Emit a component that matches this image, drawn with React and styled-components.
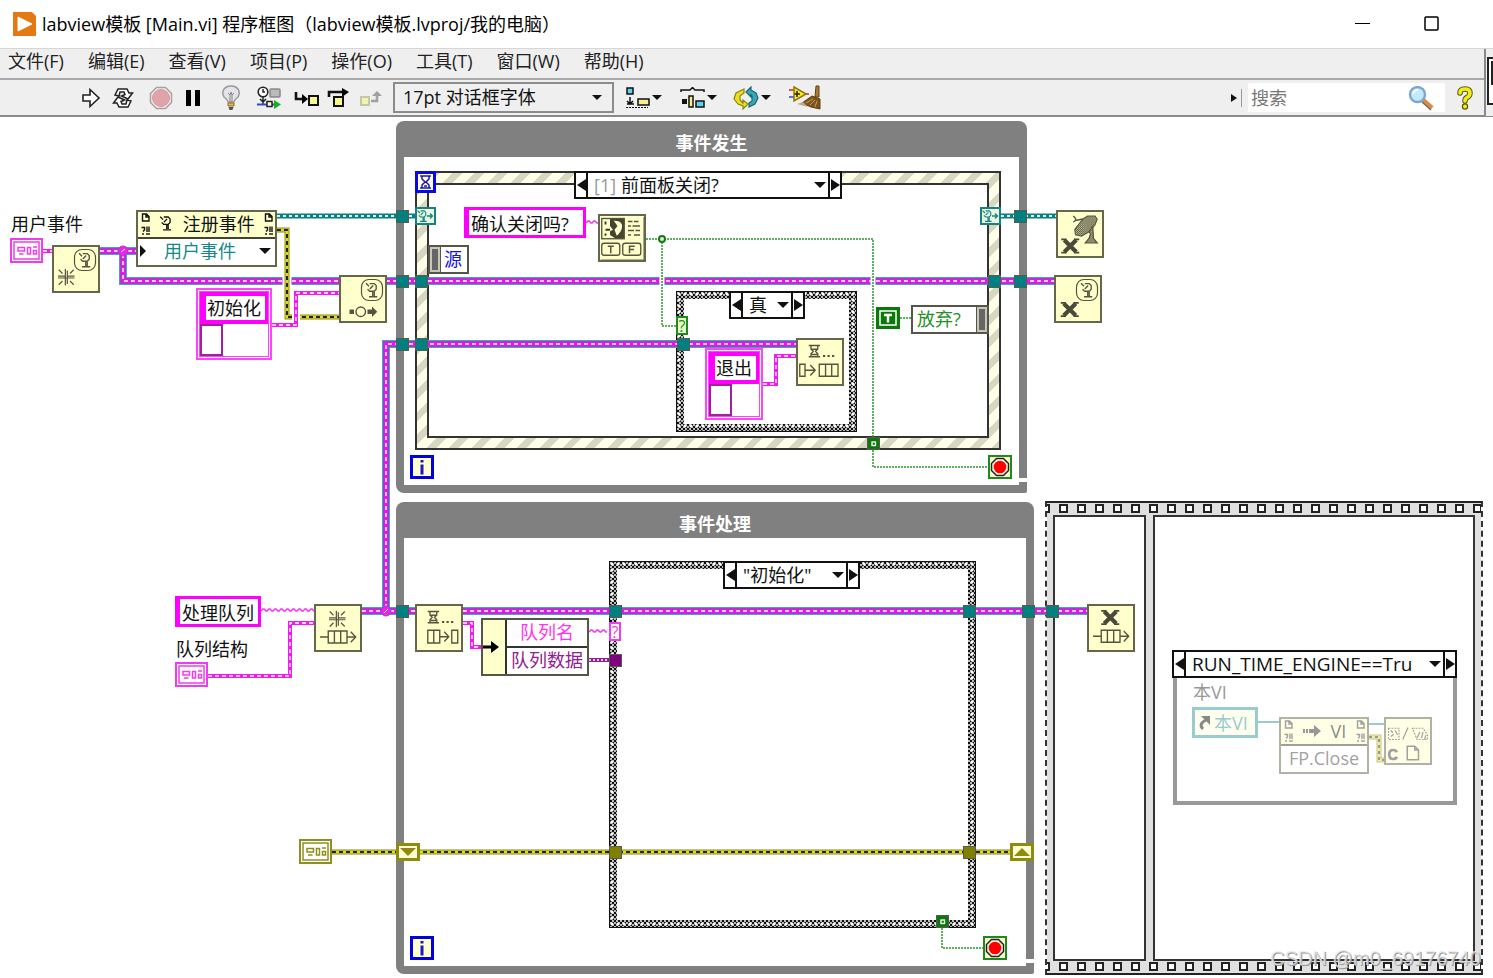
import React from 'react';
import styled, { createGlobalStyle, css } from 'styled-components';

const CHROME_HEIGHT = 117;
const FONT = '"Open Sans", "Noto Sans CJK SC", sans-serif';

const GlobalStyle = createGlobalStyle`
  *, *::before, *::after { box-sizing: border-box; }
  html, body, #root { height: 100%; }
  body { margin: 0; background: #fff; font: 18px/24px ${FONT}; color: #111; overflow: hidden; }
  button, input, select { font: inherit; color: inherit; margin: 0; padding: 0; border: 0; border-radius: 0; background: transparent; outline: 0; }
  select { appearance: none; }
  svg { display: block; flex: none; }
`;

const Window = styled.div`
  display: flex;
  flex-direction: column;
  height: 100vh;
`;

/* ---------- window chrome ---------- */

const TitleBar = styled.header`
  display: flex;
  align-items: center;
  gap: 6px;
  height: 48px;
  padding: 0 12px;
  color: #000;
  flex: none;
  svg { flex: none; }
`;
const WindowTitle = styled.h1`
  margin: 0;
  flex: 1;
  font-size: 18px;
  font-weight: 400;
  line-height: 24px;
  white-space: nowrap;
`;
const WindowButtons = styled.div`
  display: flex;
  gap: 21px;
  padding-right: 25px;
`;
const WindowButton = styled.button`
  display: grid;
  place-items: center;
  width: 48px;
  height: 44px;
`;

const Chrome = styled.div`
  display: flex;
  height: 69px;
  flex: none;
  background: #efefef;
  border-top: 1px solid #d6d6d6;
`;
const Bars = styled.div`
  flex: 1;
  min-width: 0;
  border-right: 2px solid #8a8a8a;
`;
const ConnectorPane = styled.aside`
  width: 7px;
  overflow: hidden;
  padding-top: 8px;
  border-bottom: 1px solid #8a8a8a;
`;
const ConnectorIcon = styled.div`
  width: 48px;
  height: 48px;
  margin-left: 1px;
  border: 2px solid #222;
  background: #fff;
  padding: 2px;
  &::after { content: ''; display: block; width: 24px; height: 24px; border: 2px solid #222; }
`;
const MenuBar = styled.nav`
  display: flex;
  align-items: center;
  gap: 24px;
  height: 31px;
  padding: 0 0 6px 8px;
  border-bottom: 2px solid #a8a8a8;
`;
const MenuItem = styled.button`
  height: 24px;
  line-height: 24px;
  color: #222;
  white-space: nowrap;
`;
const Toolbar = styled.div`
  display: flex;
  align-items: center;
  gap: 6px;
  height: 37px;
  padding: 0 3px 0 75px;
  border-bottom: 2px solid #8a8a8a;
`;
const ToolGroup = styled.div`
  display: flex;
`;
const ToolButton = styled.button`
  display: flex;
  align-items: center;
  justify-content: center;
  gap: 2px;
  width: ${(p) => (p.$wide ? 48 : 32)}px;
  height: 32px;
`;
const FontPicker = styled.div`
  position: relative;
  width: 221px;
  height: 31px;
  border: 2px solid #8c8c8c;
  svg { position: absolute; right: 10px; top: 11px; pointer-events: none; }
  select { width: 100%; height: 27px; padding-left: 8px; line-height: 27px; }
`;
const SearchArea = styled.div`
  display: flex;
  align-items: center;
  gap: 4px;
  margin-left: auto;
`;
const Divider = styled.span`
  width: 1px;
  height: 18px;
  margin-right: 2px;
  background: #999;
`;
const SearchBox = styled.label`
  display: flex;
  align-items: center;
  width: 197px;
  height: 29px;
  padding: 0 10px 0 3px;
  background: #fff;
  input { flex: 1; min-width: 0; height: 27px; }
  input::placeholder { color: #777; opacity: 1; }
`;

/* ---------- diagram canvas ---------- */

const Canvas = styled.main`
  position: relative;
  flex: 1;
  min-height: 0;
  overflow: hidden;
  background: #fff;
`;
const placed = css`
  position: absolute;
  left: ${(p) => p.$x}px;
  top: ${(p) => p.$y - CHROME_HEIGHT}px;
  width: ${(p) => (p.$w ? `${p.$w}px` : 'auto')};
  height: ${(p) => (p.$h ? `${p.$h}px` : 'auto')};
`;
const WireLayer = styled.svg`
  position: absolute;
  left: 0;
  top: 0;
  width: 100%;
  height: 100%;
`;
const WhileLoop = styled.section`
  ${placed}
  display: flex;
  flex-direction: column;
  background: #808080;
  border-radius: 8px 8px 2px 8px;
  padding: 0 8px 8px;
  &::before {
    content: '';
    position: absolute;
    right: 0;
    bottom: 11px;
    width: 9px;
    height: 4px;
    background: #fff;
  }
  &::after { content: ''; flex: 1; background: #fff; }
`;
const LoopTitle = styled.h2`
  margin: 0;
  padding-top: 10px;
  height: 36px;
  flex: none;
  color: #fff;
  font-size: 18px;
  font-weight: 700;
  line-height: 24px;
  text-align: center;
`;
const EventFrame = styled.section`
  ${placed}
  border: 2px solid #333;
  padding: 10px;
  background: repeating-linear-gradient(135deg, #fffee6 0 9px, #d8d7c4 9px 16px);
  &::before { content: ''; display: block; height: 100%; background: #fff; border: 2px solid #333; }
`;
const CaseFrame = styled.section`
  ${placed}
  border: 1px solid #111;
  padding: 7px;
  background:
    radial-gradient(circle at 2px 2px, #fff 1px, transparent 2px) 0 0 / 6px 6px,
    repeating-conic-gradient(#111 0 25%, #bbb 0 50%) 0 0 / 4px 4px;
  &::before { content: ''; display: block; height: 100%; background: #fff; }
`;
const SequenceFrame = styled.section`
  ${placed}
  display: flex;
  flex-direction: column;
  background: #e0e0e0 padding-box;
  border: 2px dashed #333;
  border-top: 2px solid #222;
  border-bottom: 2px solid #222;
`;
const FilmStrip = styled.div`
  display: flex;
  gap: 9px;
  height: 12px;
  padding-top: 1px;
  overflow: hidden;
  i { flex: none; width: 9px; height: 9px; border: 2px solid #222; background: #fff; }
  i:first-child { margin-left: -6px; }
`;
const Frames = styled.div`
  display: flex;
  flex: 1;
  gap: 7px;
  padding: 0 6px;
`;
const Frame = styled.div`
  flex: ${(p) => (p.$first ? '0 0 93px' : '1')};
  border: 2px solid #333;
  background: #fff;
`;
const DisabledFrame = styled.section`
  ${placed}
  border: 4px solid #999;
  background: #fff;
`;
const Selector = styled.div`
  ${placed}
  display: flex;
  border: 2px solid #111;
  background: #fff;
  font-size: ${(p) => (p.$latin ? 19 : 18)}px;
`;
const SelectorStep = styled.button`
  display: grid;
  place-items: center;
  width: 12px;
  border: 0 solid #111;
  border-right-width: ${(p) => (p.$next ? 0 : 2)}px;
  border-left-width: ${(p) => (p.$next ? 2 : 0)}px;
`;
const SelectorValue = styled.label`
  position: relative;
  flex: 1;
  min-width: 0;
  display: flex;
  align-items: center;
  padding-left: 6px;
  select { flex: 1; min-width: 0; height: 24px; line-height: 24px; }
  svg { position: absolute; right: 2px; top: 9px; pointer-events: none; }
  span { color: #999; margin-right: 5px; }
`;
const Caption = styled.p`
  ${placed}
  margin: 0;
  line-height: 24px;
  white-space: nowrap;
  color: ${(p) => (p.$dim ? '#999' : '#111')};
`;
const NodeBox = styled.div`
  ${placed}
  background: #ffffcc;
  border: 2px solid #66664d;
  opacity: ${(p) => (p.$dim ? 0.5 : 1)};
  svg { margin: -2px; }
`;
const Tunnel = styled.div`
  ${placed}
  border: 1px solid #5a5a4a;
  background: ${(p) => p.$color};
`;
const GlyphBox = styled.div`
  ${placed}
  display: grid;
  place-items: center;
  place-content: center;
  border: ${(p) => p.$line || 2}px solid ${(p) => p.$color};
  background: ${(p) => p.$fill || '#ffffdd'};
  color: ${(p) => p.$color};
  font-size: 16px;
  line-height: 14px;
  overflow: hidden;
`;
const StringConstant = styled.input`
  && {
    ${placed}
    border: 3px solid #f0f;
    border-left-width: 5px;
    background: #fff;
    padding-left: 2px;
  }
`;
const ClusterConstant = styled.div`
  ${placed}
  border: 2px solid #f4f;
  padding: 1px;
  background: #fff;
  > div { display: flex; flex-direction: column; height: 100%; border: 1px solid #f4f; }
`;
const ClusterName = styled.div`
  display: flex;
  height: 32px;
  padding: 4px 3px 4px 6px;
  background: #f0f;
  input { width: 100%; height: 24px; background: #fff; padding-left: 1px; }
`;
const ClusterValue = styled.div`
  flex: 1;
  width: 23px;
  border: 2px solid #a020a0;
`;
const RegisterNode = styled.div`
  ${placed}
  display: flex;
  flex-direction: column;
  background: #fff;
  border: 2px solid #66664d;
  opacity: ${(p) => (p.$dim ? 0.5 : 1)};
`;
const RegisterHead = styled.div`
  display: flex;
  align-items: center;
  justify-content: space-between;
  height: 27px;
  padding: 0 2px 2px 3px;
  background: #ffffcc;
  border-bottom: 2px solid #444433;
`;
const RegisterRow = styled.label`
  position: relative;
  flex: 1;
  display: flex;
  align-items: center;
  justify-content: center;
  padding-bottom: 2px;
  color: ${(p) => p.$color};
  select { width: 100%; height: 24px; line-height: 24px; padding-left: 26px; }
  svg:first-child { position: absolute; left: 2px; top: 6px; }
  svg:last-child { position: absolute; right: 4px; top: 9px; pointer-events: none; }
`;
const EventData = styled.div`
  ${placed}
  display: flex;
  flex-direction: ${(p) => (p.$right ? 'row-reverse' : 'row')};
  border: 2px solid #55554a;
  background: #fff;
  color: ${(p) => p.$color};
  line-height: 25px;
  span { flex: 1; padding-left: 4px; }
  i { width: 10px; border: 2px solid #c8c6b4; background: #666; box-shadow: 0 0 0 1px #55554a; }
`;
const Unbundle = styled.div`
  ${placed}
  display: grid;
  grid-template-columns: 22px 1fr;
  border: 2px solid #55554a;
  background: #ffffcc;
  ul { margin: 0; padding: 0; list-style: none; border-left: 2px solid #333; background: #fff; }
  li { height: 26px; line-height: 25px; text-align: center; color: #f3e; }
  li + li { border-top: 2px solid #333; color: #902090; height: 28px; }
  svg { align-self: center; }
`;
const Reference = styled.div`
  ${placed}
  display: flex;
  align-items: center;
  gap: 3px;
  padding-left: 3px;
  border: 3px solid #99cccc;
  background: #fffff0;
  color: #99cccc;
  white-space: nowrap;
`;
const Watermark = styled.p`
  ${placed}
  margin: 0;
  font: 20px/24px "Liberation Sans", sans-serif;
  color: rgba(232, 232, 232, 0.8);
  text-shadow: 1px 1px 0 #999;
  white-space: nowrap;
`;

/* ---------- small drawings ---------- */

const Down = ({ w = 12, color = '#111' }) => (
  <svg width={w} height={w / 2} viewBox="0 0 12 6"><path d="M0 0H12L6 6Z" fill={color} /></svg>
);
const Side = ({ next }) => (
  <svg width="9" height="12" viewBox="0 0 9 12"><path d={next ? 'M0 0L9 6L0 12Z' : 'M9 0L0 6L9 12Z'} fill="#111" /></svg>
);
const INK = '#55553f';

const Dish = ({ x = 0, y = 0, c = INK }) => (
  <g transform={`translate(${x} ${y})`} fill="none" stroke={c} strokeWidth="0.9">
    <path d="M0.5 0.5L2.500 2.500M3 0.700H6L7.300 2V4.500L6 5.800H3L1.500 4.500M3 4.300L5.300 2M5 5.800V9M6 5.800V9M2.500 9.500H8" />
  </g>
);
const BadgeDish = () => (
  <g>
    <rect x="15" y="3" width="14" height="14" rx="5" fill="none" stroke={INK} strokeWidth="0.8" />
    <Dish x={17.5} y={5} />
  </g>
);
const Burst = ({ x, y }) => (
  <g transform={`translate(${x} ${y})`} fill="none" stroke={INK} strokeWidth="0.8">
    <path d="M-5.500 0.500H5.500M-5.500 -0.700H-1M1 -0.700H5.500M-0.600 -5.500V5.500M0.700 -4.500V4.500M-5 -5L-2.500 -2.500M2.500 2.500L5 5M5 -5L2.500 -2.500M-2.500 2.500L-5 5" />
  </g>
);
const Cross = ({ x, y }) => (
  <g transform={`translate(${x} ${y})`} fill="none" stroke="#4a4a3a">
    <path d="M2.500 1L10.500 9M10.500 1L2.500 9" strokeWidth="2.800" />
    <path d="M0.5 0.600H4M9 0.600H12.500M0.5 9.400H4M9 9.400H12.500" strokeWidth="1.200" />
  </g>
);
const QueueBoxes = () => (
  <path d="M4 22H9.500M9.500 18H22V26H9.500ZM13.600 18V26M17.800 18V26M22 22H27.500M24.500 18.500L27.800 22L24.500 25.500" fill="none" stroke={INK} strokeWidth="0.9" />
);
const Hourglass = () => (
  <g stroke={INK} fill="none" strokeWidth="0.9">
    <path d="M8.500 5H16M8.500 12.500H16M10 5.500V7.500L11.500 8.800L10 10.500V12M14.500 5.500V7.500L13 8.800L14.500 10.500V12M10.500 7.500H14M10.500 11H14" />
    <path d="M18 12H19.500M21 12H22.500M24 12H25.500" strokeWidth="1.200" />
  </g>
);

const nodeArt = {
  createEvent: <><BadgeDish /><Burst x={9.5} y={21.5} /></>,
  generateEvent: (
    <>
      <BadgeDish />
      <rect x="7" y="23" width="3" height="3" fill={INK} />
      <circle cx="14.500" cy="24.500" r="3.200" fill="none" stroke={INK} strokeWidth="0.9" />
      <path d="M19 23H22V21L25.500 24.500L22 28V26H19Z" fill={INK} />
    </>
  ),
  destroyEvent: <><BadgeDish /><Cross x={4} y={18} /></>,
  createQueue: <><Burst x={15.5} y={10} /><QueueBoxes /></>,
  destroyQueue: <><Cross x={9} y={4} /><g transform="translate(0 -0.5)"><QueueBoxes /></g></>,
  dequeue: (
    <>
      <Hourglass />
      <path d="M8.500 17.500H16.500V26H8.500ZM12.500 17.500V26M16.500 21.800H22M19.500 18.500L22.500 21.800L19.500 25M24.500 17.500H28.500V26H24.500Z" fill="none" stroke={INK} strokeWidth="0.9" />
    </>
  ),
  enqueue: (
    <>
      <Hourglass />
      <path d="M2.500 17.500H6V25.500H2.500ZM6 21.500H12.500M9.500 18L12.800 21.500L9.500 25M15.500 17.500H28V25.500H15.500ZM19.700 17.500V25.500M23.800 17.500V25.500" fill="none" stroke={INK} strokeWidth="0.9" />
    </>
  ),
  unregister: (
    <>
      <defs>
        <pattern id="mesh" width="1.400" height="1.400" patternUnits="userSpaceOnUse">
          <rect width="1.400" height="1.400" fill="#d4d4aa" /><path d="M0 0H0.7V0.7H0ZM0.7 0.7H1.400V1.400H0.7Z" fill="#44442f" />
        </pattern>
      </defs>
      <path d="M11.500 4L13 5.500V7L11.500 8M13 7L18 6" stroke={INK} fill="none" strokeWidth="0.900" />
      <path d="M18 6L21 4H26L27.500 6L26 10L22 14.500L17 17.500L13 16.500L12.500 13Z" fill="url(#mesh)" stroke={INK} strokeWidth="0.7" />
      <path d="M22 14.500L24.500 11L25 19L27.500 22H19.500L22 19L23 16Z" fill="url(#mesh)" stroke={INK} strokeWidth="0.8" />
      <Cross x={3} y={19} />
    </>
  ),
  dialog: (
    <>
      <path d="M31 2V31H2" fill="none" stroke="#66664d" strokeWidth="1.400" />
      <rect x="2.500" y="3" width="15" height="13.500" fill="#ffffcc" />
      <path d="M8 3H17.500V16.500H12L8 14V11.500L10 10.500L8 8Z" fill="#44442f" />
      <path d="M10.500 4.500Q16.500 4 16 9Q15.500 12 12.500 14.500L11 10.500L13 8Z" fill="#ffffcc" />
      <path d="M5 5V7M5 10.500H8M5 13V14.500" stroke="#333" strokeWidth="1.200" />
      <rect x="2.500" y="3" width="15" height="13.500" fill="none" stroke={INK} strokeWidth="0.9" />
      <path d="M20 5H23M24 5H27M20 8H22M23 8H28M20 11H24M25 11H28M20 14H22M24 14H28" stroke={INK} strokeWidth="0.9" />
      <rect x="2.500" y="19.500" width="12" height="8" rx="1.500" fill="none" stroke={INK} strokeWidth="0.9" />
      <rect x="16.500" y="19.500" width="12" height="8" rx="1.500" fill="none" stroke={INK} strokeWidth="0.9" />
      <path d="M6.500 21.500H10.500M8.500 21.500V26.200M21 26.200V21.500H24.500M21 23.700H24" fill="none" stroke={INK} strokeWidth="1" />
    </>
  ),
  closeRef: (
    <>
      <g fill="none" stroke="#444" strokeWidth="0.8">
        <path d="M3 7.500H10V15H3ZM19 7.500H26L29 12V15H22Z" strokeDasharray="1.200 0.800" />
        <path d="M4.500 9L6 10.500M7.500 9L9 12M4.500 13L6.500 11.500M24 10L22 14M26 10L25 14M28 12L27 15" />
        <path d="M12.500 15L16 7" />
        <path d="M15.500 19.500H20.500L23 22V28.500H15.500ZM20.500 19.500V22H23" strokeWidth="1" />
      </g>
      <path d="M8.500 23.500Q8 22 6 22Q3.500 22 3.500 25T6 28Q8 28 8.500 26.500" fill="none" stroke="#444" strokeWidth="1.800" />
    </>
  ),
};

function DiagramNode({ x, y, art, dim }) {
  return (
    <NodeBox $x={x} $y={y} $w={48} $h={48} $dim={dim}>
      <svg width="48" height="48" viewBox="0 0 32 32">{nodeArt[art]}</svg>
    </NodeBox>
  );
}

function CaseSelector({ x, y, w, value, index, latin }) {
  return (
    <Selector $x={x} $y={y} $w={w} $h={28} $latin={latin}>
      <SelectorStep aria-label="上一个分支"><Side /></SelectorStep>
      <SelectorValue>
        {index && <span>{index}</span>}
        <select aria-label="分支选择" defaultValue={value}><option>{value}</option></select>
        <Down />
      </SelectorValue>
      <SelectorStep $next aria-label="下一个分支"><Side next /></SelectorStep>
    </Selector>
  );
}

function NamedCluster({ x, y, w, h, name }) {
  return (
    <ClusterConstant $x={x} $y={y} $w={w} $h={h}>
      <div>
        <ClusterName><input aria-label="队列名" defaultValue={name} /></ClusterName>
        <ClusterValue />
      </div>
    </ClusterConstant>
  );
}

const ClusterIcon = ({ x, y, c }) => (
  <g transform={`translate(${x} ${y})`} stroke={c} fill="#fff">
    <rect x="1" y="1" width="31" height="23" strokeWidth="2" />
    <rect x="4" y="4" width="25" height="17" strokeWidth="1.500" />
    <path d="M8 9.500H14.500V13H8ZM9 16H13.500M17.500 9.500H20.500V16H17.500ZM23 9H27M23.500 12.500H26.500V16H23.500Z" fill="none" strokeWidth="1.500" />
  </g>
);

const PortMarks = ({ c = '#111' }) => (
  <svg width="9" height="24" viewBox="0 0 9 24">
    <path d="M1.500 2H5.500L8 4.500V9H1.500ZM5 2V5H8" fill="none" stroke={c} strokeWidth="1.400" />
    <path d="M0.5 15.500H3.500V18L2 19.500M2 21V23M6 14.500V20M8 14.500V20M6 21V23M8 21V23" fill="none" stroke={c} strokeWidth="1.400" />
  </svg>
);

const EventTunnel = ({ x }) => (
  <GlyphBox $x={x} $y={207} $w={21} $h={18} $color="#178080" $fill="#e8f8e0">
    <svg width="17" height="14" viewBox="0 0 17 14">
      <g transform="translate(0 1) scale(1.200)"><Dish c="#178080" /></g>
      <path d="M10 7H15.500M13 4.500L15.500 7L13 9.500" fill="none" stroke="#178080" strokeWidth="1.300" />
    </svg>
  </GlyphBox>
);

const Iteration = ({ y }) => (
  <GlyphBox $x={410} $y={y} $w={24} $h={24} $line={3} $color="#0000e0" $fill="#ffffd0">
    <svg width="8" height="16" viewBox="0 0 8 16"><path d="M2.500 1H5.500V3.500H2.500ZM2.500 5.500H5.500V15.500H2.500Z" fill="#1818c8" /></svg>
  </GlyphBox>
);
const StopTerminal = ({ x, y }) => (
  <GlyphBox $x={x} $y={y} $w={24} $h={24} $color="#1c8a1c" $fill="#ffffcc">
    <svg width="20" height="20" viewBox="0 0 20 20">
      <path d="M6.500 1.500H13.500L18.500 6.500V13.500L13.500 18.500H6.500L1.500 13.500V6.500Z" fill="#fff4dc" stroke="#222" strokeWidth="1.500" />
      <circle cx="10" cy="10" r="6.300" fill="#f00" />
    </svg>
  </GlyphBox>
);
const BoolTunnel = ({ x, y }) => (
  <Tunnel $x={x} $y={y} $w={13} $h={13} $color="#0c780c">
    <svg width="11" height="11" viewBox="0 0 11 11"><rect x="4" y="4" width="3.500" height="3.500" fill="none" stroke="#fff" strokeWidth="1.300" /></svg>
  </Tunnel>
);

/* ---------- wires ---------- */

const wave = (x1, x2, y) => {
  let d = `M${x1} ${y + 1}`;
  for (let x = x1; x < x2 - 2; x += 6) d += 'l2 -2h1l2 2h1';
  return d;
};
const wirePath = (layers) => function Wire({ d }) {
  return (
    <g fill="none">
      {layers.map(([stroke, width, dash]) => <path key={stroke + width} d={d} stroke={stroke} strokeWidth={width} strokeDasharray={dash} />)}
    </g>
  );
};
const RefWire = wirePath([['#48a0c4', 8], ['#9048c0', 6], ['#ee10ee', 4], ['#ffc8ff', 2, '4 3']]);
const ClusterWire = wirePath([['#f418f4', 4], ['#fff', 1.4, '4 3']]);
const EventWire = wirePath([['#0c8080', 5], ['#d8f4f4', 2, '3 3']]);
const ErrorWire = wirePath([['#8c8c10', 5], ['#e0dc20', 3], ['#222', 2, '4 3']]);
const PaleErrorWire = wirePath([['#c8c888', 5], ['#f0ee98', 3], ['#999', 2, '3 3']]);
const VariantWire = wirePath([['#902090', 4], ['#fff', 1.4, '2 2']]);
const BoolWire = wirePath([['#2c942c', 1.5, '2 1']]);
const StringWire = wirePath([['#f030f0', 1.4]]);

function Wires() {
  return (
    <WireLayer aria-hidden="true">
      <g transform={`translate(0 ${-CHROME_HEIGHT})`}>
        <ClusterWire d="M43 251H52" />
        <RefWire d="M100 251H136" />
        <RefWire d="M123 247V281H339" />
        <circle cx="123" cy="251" r="5" fill="#f020f0" stroke="#9048c0" />
        <path d="M121 252L125 249" stroke="#fff" />
        <EventWire d="M277 216H415M1001 216H1056" />
        <path d="M287 270V292" stroke="#fff" strokeWidth="9" />
        <ErrorWire d="M277 230H287V317H339" />
        <path d="M292 317H300" stroke="#fff" strokeWidth="6" />
        <ClusterWire d="M272 325H296V293H339" />
        <RefWire d="M386 281H1054" />
        <RefWire d="M386 615V344H797" />
        <RefWire d="M362 611H415" />
        <RefWire d="M463 611H1087" />
        <circle cx="386" cy="611" r="5" fill="#f020f0" stroke="#9048c0" />
        <path d="M384 613L388 609" stroke="#fff" />
        <path d="M662 276V286M873 276V286" stroke="#fff" strokeWidth="5" />
        <BoolWire d="M646 239H873V467H988" />
        <BoolWire d="M662 239V326H676" />
        <circle cx="662" cy="239" r="3" fill="#d8f0d8" stroke="#187818" strokeWidth="2" />
        <BoolWire d="M900 318H911" />
        <BoolWire d="M942 928V948H983" />
        <StringWire d={wave(586, 598, 222)} />
        <StringWire d={wave(261, 314, 610)} />
        <StringWire d={wave(589, 609, 631)} />
        <ClusterWire d="M763 384H776V356H796" />
        <ClusterWire d="M208 676H290V623H314" />
        <ClusterWire d="M463 623H472V647H482" />
        <VariantWire d="M589 660H610" />
        <ErrorWire d="M332 852H1010" />
        <ClusterIcon x={10} y={238} c="#f03cf0" />
        <ClusterIcon x={175} y={662} c="#f03cf0" />
        <ClusterIcon x={299} y={839} c="#8f8f20" />
        <path d="M1258 722H1279M1369 724H1384" stroke="#99cccc" strokeWidth="2" />
        <PaleErrorWire d="M1369 737H1379V760H1384" />
      </g>
    </WireLayer>
  );
}

const tealTunnels = [
  [402, 216], [1020, 216], [402, 281], [421, 281], [994, 281], [1020, 281], [402, 344],
  [421, 344], [683, 344], [402, 611], [615, 611], [969, 611], [1028, 611], [1052, 611],
];

/* ---------- toolbar ---------- */

const runIcons = [
  ['运行', <svg width="20" height="22" viewBox="0 0 20 22"><path d="M2 8H9V2.500L18 11L9 19.500V14H2Z" fill="#fff" stroke="#222" strokeWidth="1.600" /></svg>],
  ['连续运行', <svg width="26" height="22" viewBox="0 0 26 22"><path d="M5 8L8 2H17L19 6H22.500L18 12L11.500 9L15 7.500L14 5H10L9 9ZM21 14L18 20H9L7 16H3.500L8 10L14.500 13L11 14.500L12 17H16L17 13Z" fill="#fff" stroke="#222" strokeWidth="1.500" /></svg>],
];
const stopIcons = [
  ['中止执行', <svg width="24" height="24" viewBox="0 0 24 24"><path d="M7.500 1.500H16.500L22.500 7.500V16.500L16.500 22.500H7.500L1.500 16.500V7.500Z" fill="#f4eeee" stroke="#a8a0a0" strokeWidth="1.500" /><circle cx="12" cy="12" r="8.500" fill="#e0a4a8" stroke="#cf9ba0" /></svg>],
  ['暂停', <svg width="16" height="18" viewBox="0 0 16 18"><path d="M1 1H6V17H1ZM10 1H15V17H10Z" fill="#000" /></svg>],
];
const stepIcons = [
  ['单步步入', <svg width="26" height="20" viewBox="0 0 26 20"><path d="M2 4V11H10" fill="none" stroke="#111" strokeWidth="2.600" /><path d="M8 6L14 11L8 16Z" /><rect x="15" y="8" width="9" height="9" fill="#f8f890" stroke="#111" strokeWidth="2" /></svg>],
  ['单步步过', <svg width="24" height="20" viewBox="0 0 24 20"><path d="M2 9V4H16" fill="none" stroke="#111" strokeWidth="2.600" /><path d="M15 0L22 4L15 9Z" /><rect x="7" y="9" width="9" height="9" fill="#f8f890" stroke="#111" strokeWidth="2" /></svg>],
  ['单步步出', <svg width="24" height="20" viewBox="0 0 24 20"><rect x="2" y="9" width="8" height="8" fill="#f2f2b4" stroke="#c8c8a0" strokeWidth="2" /><path d="M12 13H18V6" fill="none" stroke="#a0a0a0" strokeWidth="2.600" /><path d="M13 8L18 3L23 8Z" fill="#a0a0a0" /></svg>],
];
const BulbIcon = () => (
  <svg width="20" height="26" viewBox="0 0 20 26">
    <path d="M7 17Q6 14 3 12Q1 9 2 6Q4 1 10 1T18 6Q19 9 17 12Q14 14 13 17Z" fill="#e4e4e8" stroke="#999" strokeWidth="1.500" />
    <path d="M7 8L9 10L10 7L11 10L13 8M9 10V17M11 10V17" fill="none" stroke="#888" />
    <path d="M7 18H13V21H7Z" fill="#e4b848" stroke="#98701c" /><path d="M7.500 22H12.500L11.500 25H8.500Z" fill="#555" />
  </svg>
);
const RetainIcon = () => (
  <svg width="26" height="24" viewBox="0 0 26 24">
    <circle cx="7" cy="6" r="4.800" fill="#fff" stroke="#222" strokeWidth="1.600" /><path d="M7 3V6H9M7 11V19M4 13L7 16L10 13" fill="none" stroke="#222" strokeWidth="1.500" />
    <rect x="14" y="3" width="10" height="8" rx="1" fill="#bbb" stroke="#888" strokeWidth="1.500" />
    <path d="M1 18.500H19" stroke="#2450d0" strokeWidth="2" /><rect x="11" y="15.500" width="5" height="5" fill="#fff" stroke="#222" strokeWidth="1.500" />
    <path d="M18 14L25 18.500L18 23Z" fill="#18b020" />
  </svg>
);
const AlignIcon = () => (
  <svg width="24" height="22" viewBox="0 0 24 22">
    <rect x="1" y="1" width="6" height="6" fill="#60d0f0" stroke="#111" strokeWidth="1.500" /><path d="M4 10V17M1 14L4 17L7 14M1 17H8" fill="none" stroke="#111" strokeWidth="1.500" />
    <path d="M0 20.500H22" stroke="#111" strokeDasharray="2 1" /><rect x="12" y="12" width="11" height="6" fill="#f8f090" stroke="#111" strokeWidth="1.500" />
  </svg>
);
const DistributeIcon = () => (
  <svg width="25" height="22" viewBox="0 0 25 22">
    <path d="M1 5V3H10L12.500 0.500L15 3H24V5" fill="none" stroke="#111" strokeWidth="1.500" /><rect x="2" y="12" width="5" height="5" fill="#111" />
    <rect x="9" y="9" width="4" height="11" fill="#f8f090" stroke="#111" strokeWidth="1.500" /><rect x="16" y="14" width="8" height="6" fill="#60d0f0" stroke="#111" strokeWidth="1.500" />
  </svg>
);
const ReorderIcon = () => (
  <svg width="26" height="24" viewBox="0 0 26 24">
    <path d="M11 3L3 7L1 13L5 18L10 20V23L15 18L10 14V17L7 14V10L11 7Z" fill="#e8e020" stroke="#8c8410" strokeWidth="1.200" />
    <path d="M13 6L18 1V4L23 7L25 12L22 18L16 21V17L19 15V10L18 8V11Z" fill="#38a8b8" stroke="#186878" strokeWidth="1.200" />
  </svg>
);
const CleanIcon = () => (
  <svg width="34" height="26" viewBox="0 0 34 26">
    <path d="M0 5H5M14 9H20" stroke="#e02020" strokeWidth="1.500" /><path d="M0 12H5" stroke="#2848e0" strokeWidth="1.500" />
    <path d="M5 2L17 9L5 16Z" fill="#f8e828" stroke="#907808" strokeWidth="1.500" /><path d="M8 6V12M5.500 9H11" stroke="#222" strokeWidth="1.500" />
    <path d="M27 1H30V12H26Z" fill="#a87838" stroke="#604010" /><path d="M23 11L31 14V24L22 22L13 18Z" fill="#7c5420" stroke="#604010" />
    <path d="M17 18L24 14M21 20L26 15M26 22L28 16" stroke="#c8a058" /><path d="M8 19L14 17L19 22Z" fill="#b8a890" />
  </svg>
);
const SearchIcon = () => (
  <svg width="28" height="26" viewBox="0 0 28 26">
    <path d="M16 15L25 23" stroke="#d88c40" strokeWidth="4.500" /><path d="M15 17L24 25" stroke="#806860" strokeWidth="1.500" />
    <circle cx="10.500" cy="9.500" r="7.500" fill="#c4e8fc" stroke="#7ca8d0" strokeWidth="2.400" /><path d="M6 9Q7 5 11 5" fill="none" stroke="#fff" strokeWidth="2" />
  </svg>
);
const HelpIcon = () => (
  <svg width="18" height="24" viewBox="0 0 18 24">
    <g fill="none" strokeLinecap="round"><path d="M4 7Q4 3 9 3T14 7Q14 10 11 11.500Q9 12.500 9 15" stroke="#55550c" strokeWidth="5.500" /><path d="M4 7Q4 3 9 3T14 7Q14 10 11 11.500Q9 12.500 9 15" stroke="#f4ec18" strokeWidth="3.600" /></g>
    <circle cx="9" cy="20.500" r="2.600" fill="#f4ec18" stroke="#55550c" strokeWidth="1.200" />
  </svg>
);

const menus = ['文件(F)', '编辑(E)', '查看(V)', '项目(P)', '操作(O)', '工具(T)', '窗口(W)', '帮助(H)'];

const IconGroup = ({ items }) => (
  <ToolGroup>{items.map(([name, icon]) => <ToolButton key={name} aria-label={name}>{icon}</ToolButton>)}</ToolGroup>
);

const holes = Array.from({ length: 25 }, (_, i) => <i key={i} />);

export default function App() {
  return (
    <Window>
      <GlobalStyle />
      <TitleBar>
        <svg width="24" height="24" viewBox="0 0 24 24"><path d="M1 0H20L24 4V24H1Z" fill="#e47911" /><path d="M6 5L20 12L6 19Z" fill="#fff" stroke="#fff" strokeLinejoin="round" /></svg>
        <WindowTitle>labview模板 [Main.vi] 程序框图（labview模板.lvproj/我的电脑）</WindowTitle>
        <WindowButtons>
          <WindowButton aria-label="最小化"><svg width="16" height="16"><path d="M0 7.500H15" stroke="#000" /></svg></WindowButton>
          <WindowButton aria-label="最大化"><svg width="16" height="16"><rect x="1" y="1" width="13" height="13" rx="1" fill="none" stroke="#000" strokeWidth="1.500" /></svg></WindowButton>
        </WindowButtons>
      </TitleBar>
      <Chrome>
        <Bars>
          <MenuBar>{menus.map((m) => <MenuItem key={m}>{m}</MenuItem>)}</MenuBar>
          <Toolbar>
            <IconGroup items={runIcons} />
            <IconGroup items={stopIcons} />
            <ToolButton aria-label="高亮显示执行过程"><BulbIcon /></ToolButton>
            <ToolButton aria-label="保存连线值"><RetainIcon /></ToolButton>
            <IconGroup items={stepIcons} />
            <FontPicker>
              <select aria-label="字体" defaultValue="17pt 对话框字体"><option>17pt 对话框字体</option></select>
              <Down w={10} />
            </FontPicker>
            <ToolButton $wide aria-label="对齐对象"><AlignIcon /><Down w={10} /></ToolButton>
            <ToolButton $wide aria-label="分布对象"><DistributeIcon /><Down w={10} /></ToolButton>
            <ToolButton $wide aria-label="重新排序"><ReorderIcon /><Down w={10} /></ToolButton>
            <ToolButton $wide aria-label="整理程序框图"><CleanIcon /></ToolButton>
            <SearchArea>
              <svg width="6" height="8"><path d="M0 0L6 4L0 8Z" fill="#111" /></svg>
              <Divider />
              <SearchBox><input type="search" aria-label="搜索" placeholder="搜索" /><SearchIcon /></SearchBox>
              <ToolButton aria-label="帮助"><HelpIcon /></ToolButton>
            </SearchArea>
          </Toolbar>
        </Bars>
        <ConnectorPane><ConnectorIcon /></ConnectorPane>
      </Chrome>

      <Canvas>
        <WhileLoop $x={396} $y={121} $w={631} $h={372}><LoopTitle>事件发生</LoopTitle></WhileLoop>
        <WhileLoop $x={396} $y={502} $w={638} $h={472}><LoopTitle>事件处理</LoopTitle></WhileLoop>
        <EventFrame $x={415} $y={171} $w={586} $h={279} />
        <CaseFrame $x={676} $y={291} $w={181} $h={141} />
        <CaseFrame $x={609} $y={561} $w={367} $h={367} />
        <SequenceFrame $x={1045} $y={501} $w={438} $h={474}>
          <FilmStrip>{holes}</FilmStrip>
          <Frames><Frame $first /><Frame /></Frames>
          <FilmStrip>{holes}</FilmStrip>
        </SequenceFrame>
        <DisabledFrame $x={1173} $y={674} $w={284} $h={131} />

        <Wires />

        {tealTunnels.map(([cx, cy]) => <Tunnel key={`${cx}-${cy}`} $x={cx - 6} $y={cy - 6} $w={13} $h={13} $color="#008080" />)}
        <Tunnel $x={609} $y={654} $w={13} $h={13} $color="#800080" />
        <Tunnel $x={609} $y={846} $w={13} $h={13} $color="#808000" />
        <Tunnel $x={963} $y={846} $w={13} $h={13} $color="#808000" />
        <BoolTunnel x={867} y={437} />
        <BoolTunnel x={936} y={915} />
        <EventTunnel x={415} />
        <EventTunnel x={980} />

        <Caption $x={11} $y={212}>用户事件</Caption>
        <DiagramNode x={52} y={245} art="createEvent" />
        <RegisterNode $x={136} $y={210} $w={141} $h={57}>
          <RegisterHead>
            <PortMarks />
            <svg width="14" height="16" viewBox="0 0 9 11"><Dish c="#111" /></svg>
            <span>注册事件</span>
            <PortMarks />
          </RegisterHead>
          <RegisterRow $color="#148888">
            <svg width="6" height="12"><path d="M0 0L6 6L0 12Z" fill="#111" /></svg>
            <select aria-label="注册的事件" defaultValue="用户事件"><option>用户事件</option></select>
            <Down />
          </RegisterRow>
        </RegisterNode>
        <NamedCluster x={196} y={288} w={76} h={72} name="初始化" />
        <DiagramNode x={339} y={275} art="generateEvent" />

        <GlyphBox $x={415} $y={171} $w={21} $h={22} $line={3} $color="#0808e8" $fill="#ffffe0">
          <svg width="15" height="16" viewBox="0 0 15 16"><path d="M2 2H13M2 14H13M4 2V5L7 8L4 11V14M11 2V5L8 8L11 11V14M6 12H9" fill="none" stroke="#1818b8" strokeWidth="1.500" /></svg>
        </GlyphBox>
        <CaseSelector x={574} y={171} w={268} index="[1]" value="前面板关闭?" />
        <StringConstant aria-label="对话框消息" $x={464} $y={207} $w={122} $h={31} defaultValue="确认关闭吗?" />
        <DiagramNode x={598} y={214} art="dialog" />
        <EventData $x={428} $y={245} $w={41} $h={29} $color="#1010e0"><i /><span>源</span></EventData>
        <CaseSelector x={729} y={291} w={76} value="真" />
        <GlyphBox $x={676} $y={316} $w={12} $h={19} $color="#1c8a1c" $fill="#e8ffc8">?</GlyphBox>
        <NamedCluster x={705} y={348} w={58} h={72} name="退出" />
        <DiagramNode x={796} y={338} art="enqueue" />
        <GlyphBox $x={876} $y={307} $w={24} $h={22} $color="#0c780c" $fill="#0c780c">
          <svg width="18" height="16" viewBox="0 0 18 16"><rect x="1" y="1" width="16" height="14" fill="#0c780c" stroke="#fff" strokeWidth="1.500" /><path d="M5 5H13M9 4.500V12.500" fill="none" stroke="#fff" strokeWidth="2.400" /></svg>
        </GlyphBox>
        <EventData $right $x={911} $y={305} $w={78} $h={29} $color="#289028"><i /><span>放弃?</span></EventData>
        <Iteration y={455} />
        <StopTerminal x={988} y={455} />
        <DiagramNode x={1056} y={210} art="unregister" />
        <DiagramNode x={1054} y={275} art="destroyEvent" />

        <StringConstant aria-label="队列名称" $x={175} $y={596} $w={86} $h={31} defaultValue="处理队列" />
        <Caption $x={176} $y={637}>队列结构</Caption>
        <DiagramNode x={314} y={604} art="createQueue" />
        <DiagramNode x={415} y={604} art="dequeue" />
        <Unbundle $x={481} $y={618} $w={108} $h={58}>
          <svg width="22" height="14" viewBox="0 0 22 14"><path d="M0 5.500H8V1L16 7L8 13V8.500H0Z" fill="#000" /></svg>
          <ul><li>队列名</li><li>队列数据</li></ul>
        </Unbundle>
        <CaseSelector x={723} y={561} w={137} value={'"初始化"'} />
        <GlyphBox $x={609} $y={622} $w={12} $h={19} $color="#f03cf0" $fill="#fff">?</GlyphBox>
        <GlyphBox $x={396} $y={843} $w={24} $h={18} $line={3} $color="#8c8c10" $fill="#ffffd0"><Down w={16} color="#8c8c10" /></GlyphBox>
        <GlyphBox $x={1010} $y={843} $w={24} $h={18} $line={3} $color="#8c8c10" $fill="#ffffd0">
          <svg width="16" height="8"><path d="M0 8L8 0L16 8Z" fill="#8c8c10" /></svg>
        </GlyphBox>
        <Iteration y={936} />
        <StopTerminal x={983} y={936} />
        <DiagramNode x={1087} y={604} art="destroyQueue" />

        <CaseSelector latin x={1172} y={650} w={285} value="RUN_TIME_ENGINE==Tru" />
        <Caption $dim $x={1193} $y={680}>本VI</Caption>
        <Reference $x={1192} $y={707} $w={66} $h={31}>
          <svg width="13" height="16" viewBox="0 0 13 16"><path d="M5 14Q0 9 8 5" fill="none" stroke="#888" strokeWidth="3" /><path d="M3 1H12V10Z" fill="#888" /></svg>
          本VI
        </Reference>
        <RegisterNode $dim $x={1279} $y={717} $w={90} $h={57}>
          <RegisterHead>
            <PortMarks c="#444" />
            <svg width="18" height="12" viewBox="0 0 18 12"><path d="M0 4H2V8H0ZM3 4H5V8H3ZM6 4H11V0L18 6L11 12V8H6Z" fill="#333" /></svg>
            <span>VI</span>
            <PortMarks c="#444" />
          </RegisterHead>
          <RegisterRow $color="#444"><span>FP.Close</span></RegisterRow>
        </RegisterNode>
        <DiagramNode dim x={1384} y={717} art="closeRef" />
        <Watermark $x={1270} $y={946}>CSDN @m0_69176740</Watermark>
      </Canvas>
    </Window>
  );
}
